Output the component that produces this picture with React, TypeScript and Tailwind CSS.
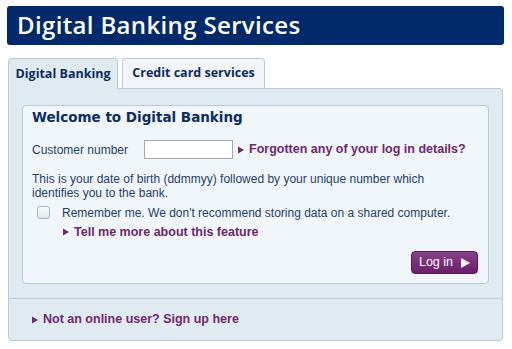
import React from "react";

const Arrow = ({ className = "" }: { className?: string }) => (
  <svg width="6" height="8" viewBox="0 0 6 8" className={className}>
    <path d="M0 0.5 L6 4 L0 7.5 Z" fill="currentColor" />
  </svg>
);

export default function App() {
  const body = { fontFamily: '"Liberation Sans", Tahoma, sans-serif' };
  return (
    <div className="w-[512px] h-[349px] bg-white" style={body}>
      <div className="pt-[6px] pl-[7px] w-[504px]">
        <div className="h-[39px] bg-[#002a6b] rounded-[3px] flex items-center pl-[10px]">
          <h1
            className="text-white text-[24px] font-semibold tracking-[0.35px] leading-none pb-[2px]"
            style={{ fontFamily: '"Open Sans", sans-serif' }}
          >
            Digital Banking Services
          </h1>
        </div>

        <div className="mt-[13px] flex pl-[1px] relative z-10">
          <div
            className="w-[110px] h-[31px] -mb-[1px] bg-[#dfebf1] border border-b-0 border-[#b7cadc] rounded-t-[4px] flex items-center justify-center text-[#0b2d63] text-[12.5px] font-bold"
            style={{ fontFamily: '"Open Sans", sans-serif' }}
          >
            Digital Banking
          </div>
          <div
            className="ml-[4px] w-[143px] h-[30px] bg-[#f4f5f8] border border-b-0 border-[#b7cadc] rounded-t-[4px] flex items-center justify-center text-[#0b2d63] text-[12.5px] font-bold"
            style={{ fontFamily: '"Open Sans", sans-serif' }}
          >
            Credit card services
          </div>
        </div>

        <div className="mx-[1px] h-[253px] bg-[#dfebf1] border border-[#b7cadc] rounded-b-[4px] rounded-tr-[4px] flex flex-col">
          <div className="mt-[16px] mx-[13px] h-[179px] bg-[#f0f6f9] border border-[#b7cadc] rounded-[4px] px-[9px] pt-[1px] text-[12px] text-[#243e6e]">
            <h2
              className="font-bold text-[#0b2d63] leading-[20px]"
              style={{ fontFamily: '"DejaVu Sans", sans-serif', fontSize: 13.5 }}
            >
              Welcome to Digital Banking
            </h2>
            <div className="flex items-center mt-[13px] h-[19px]">
              <span className="w-[112px]">Customer number</span>
              <div className="w-[89px] h-[19px] bg-white border border-[#a9a9a9]" />
              <a className="ml-[5px] flex items-center text-[#70276f] font-bold text-[12.5px]">
                <Arrow className="mr-[5px]" />
                Forgotten any of your log in details?
              </a>
            </div>
            <p className="mt-[13px] leading-[14px]">
              This is your date of birth (ddmmyy) followed by your unique number which
              <br />
              identifies you to the bank.
            </p>
            <div className="flex items-center mt-[5px] h-[15px]">
              <div className="ml-[5px] w-[13px] h-[13px] rounded-[3px] border border-[#a8b2be] bg-gradient-to-b from-[#fafbfc] to-[#e3e7eb]" />
              <span className="ml-[12px]">Remember me. We don't recommend storing data on a shared computer.</span>
            </div>
            <a className="mt-[4px] ml-[31px] flex items-center text-[#70276f] font-bold text-[12.5px] h-[16px]">
              <Arrow className="mr-[5px]" />
              Tell me more about this feature
            </a>
            <div className="flex justify-end mt-[11px] pr-[1px]">
              <button className="w-[67px] h-[23px] rounded-[4px] border border-[#5a1b5a] bg-gradient-to-b from-[#8b3f8b] to-[#6a1f69] text-white text-[12.5px] flex items-center justify-center gap-[8px]">
                Log in
                <svg width="9" height="10" viewBox="0 0 9 10">
                  <path d="M0 0 L9 5 L0 10 Z" fill="white" />
                </svg>
              </button>
            </div>
          </div>
          <div className="mt-[14px] border-t border-[#b7cadc]" />
          <div className="flex-1 flex items-center pl-[23px]">
            <a className="flex items-center text-[#70276f] font-bold text-[12.5px]">
              <Arrow className="mr-[5px]" />
              Not an online user? Sign up here
            </a>
          </div>
        </div>
      </div>
    </div>
  );
}
